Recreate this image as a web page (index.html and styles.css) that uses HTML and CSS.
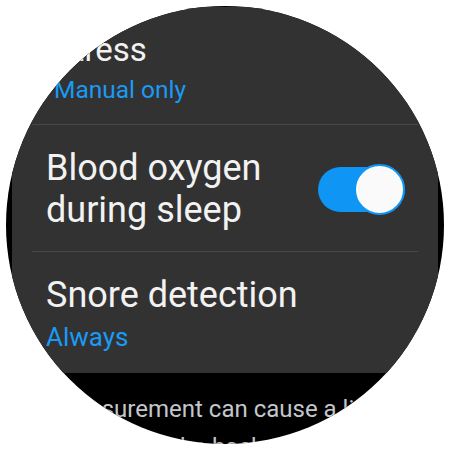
FILE: index.html
```html
<!DOCTYPE html>
<html lang="en">
<head>
    <meta charset="UTF-8">
    <meta name="viewport" content="width=device-width, initial-scale=1.0">
    <title>Sleep settings</title>
    <link rel="stylesheet" href="styles.css">
</head>
<body>
    <div class="watch">
        <!-- Settings card, scrolled a little past the top -->
        <div class="card">
            <div class="item item-first">
                <div class="title">Stress</div>
                <div class="value">Manual only</div>
            </div>
            <div class="divider"></div>
            <div class="item item-switch">
                <div class="title">Blood oxygen<br>during sleep</div>
                <div class="switch on"><span class="knob"></span></div>
            </div>
            <div class="divider"></div>
            <div class="item item-last">
                <div class="title">Snore detection</div>
                <div class="value">Always</div>
            </div>
        </div>

        <p class="note">Measurement can cause a light to glow on the back of your watch.</p>
    </div>
</body>
</html>
```

FILE: styles.css
```css
* {
  margin: 0;
  padding: 0;
  box-sizing: border-box;
}

body {
  font-family: Roboto, "Noto Sans", Arial, sans-serif;
  background-color: #fff;
  width: 450px;
  height: 450px;
  overflow: hidden;
}

.watch {
  width: 438px;
  height: 438px;
  margin: 6px;
  border-radius: 50%;
  overflow: hidden;
  background-color: #000;
}

.card {
  margin: 1px 6px 0;
  background-color: #323232;
  border-radius: 26px 26px 0 0;
}

.item {
  padding: 22px 33px 18px 34px;
}

.title {
  font-size: 36px;
  line-height: 42px;
  color: #f2f2f2;
}

.value {
  margin-top: 4px;
  font-size: 26px;
  line-height: 34px;
  color: #1a9af4;
}

/* the top row is shrunk a little as it scrolls off the edge */
.item-first {
  padding: 23px 33px 18px 42px;
}

.item-first .title {
  font-size: 33px;
  line-height: 40px;
}

.item-first .value {
  font-size: 24.5px;
  line-height: 32px;
}

.item-switch {
  display: flex;
  align-items: center;
  justify-content: space-between;
  padding-bottom: 20px;
}

.item-last {
  padding-bottom: 19px;
}

.divider {
  height: 1px;
  margin: 0 20px;
  background-color: #474747;
}

/* toggle switch */
.switch {
  position: relative;
  width: 87px;
  height: 45px;
  border-radius: 23px;
  background-color: #0f95f4;
}

.switch .knob {
  position: absolute;
  right: 0;
  top: -3px;
  width: 51px;
  height: 51px;
  border-radius: 50%;
  background-color: #fafafa;
  border: 2px solid #0f95f4;
}

.note {
  padding: 17px 30px 0 49px;
  font-size: 24px;
  line-height: 38px;
  color: #c3c7cb;
}
```
